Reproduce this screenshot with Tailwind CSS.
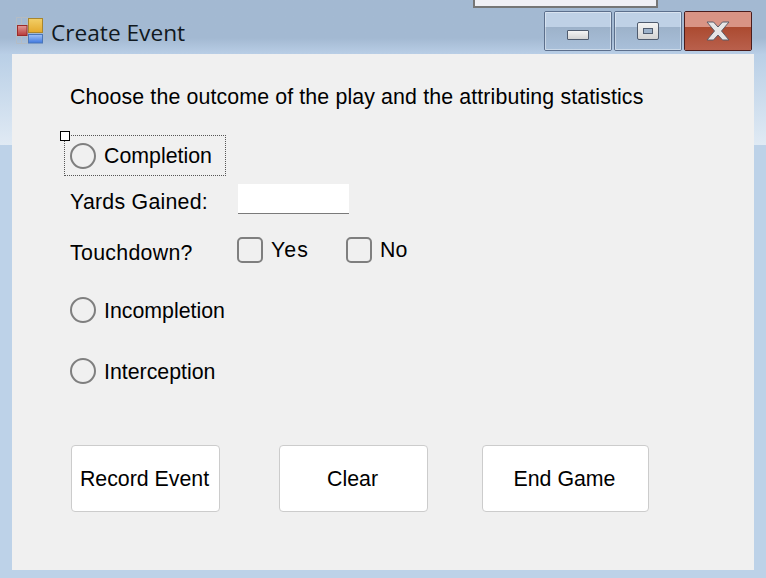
<!DOCTYPE html>
<html lang="en">
  <head>
    <meta charset="UTF-8" />
    <title>Create Event</title>
    <script src="https://cdn.jsdelivr.net/npm/@tailwindcss/browser@4"></script>
  </head>
  <body class="m-0 overflow-hidden bg-[#bdd2e8]">
    <div class="relative w-[766px] h-[578px] overflow-hidden font-['Liberation_Sans',sans-serif] text-[21.33px] text-black bg-[#bdd2e8]">
      <!-- window side glow -->
      <div class="absolute left-0 top-[54px] w-[12px] h-[91px] bg-gradient-to-b from-[#b9cfe6] to-[#e0eaf4]"></div>
      <div class="absolute right-0 top-[54px] w-[12px] h-[91px] bg-gradient-to-b from-[#b9cfe6] to-[#e0eaf4]"></div>

      <!-- title bar -->
      <div class="h-[54px] flex items-start bg-gradient-to-b from-[#a3b9d2] via-[#a3b9d2] via-70% to-[#b9cee6] relative">
        <svg class="absolute left-[16px] top-[17px]" width="28" height="28" viewBox="0 0 28 28">
          <defs>
            <linearGradient id="red" x1="0" y1="0" x2="0" y2="1"><stop offset="0" stop-color="#e09a98" /><stop offset="1" stop-color="#b83a38" /></linearGradient>
            <linearGradient id="yellow" x1="0" y1="0" x2="0" y2="1"><stop offset="0" stop-color="#f2cf68" /><stop offset="1" stop-color="#e4a92c" /></linearGradient>
            <linearGradient id="blue" x1="0" y1="0" x2="0" y2="1"><stop offset="0" stop-color="#a2c2f6" /><stop offset="1" stop-color="#3f78e0" /></linearGradient>
          </defs>
          <path d="M0.5 0.5H11.5V26.5H0.5ZM0.5 8H11M0.5 19.5H11M5.5 0.5V8M5.5 20V26.5" fill="none" stroke="#b4bcc4" />
          <rect x="1.5" y="8.5" width="9.5" height="10" fill="url(#red)" stroke="#9c2a2a" />
          <rect x="12.5" y="1.5" width="14" height="14" fill="url(#yellow)" stroke="#a8862e" />
          <rect x="12.5" y="17.5" width="14" height="8.5" fill="url(#blue)" stroke="#4a76b8" />
        </svg>
        <span class="ml-[51px] mt-[18px] font-['Open_Sans',sans-serif] text-[22.67px] leading-[30px] text-[#101820]">Create Event</span>

        <!-- window buttons -->
        <div class="absolute left-[544px] top-[11px] flex gap-[2px]">
          <div class="relative w-[68px] h-[40px] rounded-[2px] border border-[#5c6f8c] overflow-hidden flex flex-col">
            <div class="h-[15px] bg-[#bfd1e6]"></div>
            <div class="flex-1 bg-gradient-to-b from-[#9db2ca] to-[#a9c0da]"></div>
            <div class="absolute inset-0 border border-white/40"></div>
            <div class="absolute left-[22px] top-[18px] w-[22px] h-[10px] rounded-[1px] border border-[#4f5b6e] bg-gradient-to-b from-[#f4f4f4] to-[#d4d4d4]"></div>
          </div>
          <div class="relative w-[68px] h-[40px] rounded-[2px] border border-[#5c6f8c] overflow-hidden flex flex-col">
            <div class="h-[15px] bg-[#bfd1e6]"></div>
            <div class="flex-1 bg-gradient-to-b from-[#9db2ca] to-[#a9c0da]"></div>
            <div class="absolute inset-0 border border-white/40"></div>
            <div class="absolute left-[22px] top-[10px] w-[22px] h-[18px] rounded-[2px] border border-[#4f5b6e] bg-gradient-to-b from-[#f4f4f4] to-[#d4d4d4] flex items-center justify-center">
              <div class="w-[10px] h-[6px] border border-[#4f5b6e] bg-[#9db2ca]"></div>
            </div>
          </div>
          <div class="relative w-[68px] h-[40px] rounded-[2px] border border-[#4a1c1c] overflow-hidden flex flex-col">
            <div class="h-[15px] bg-[#d99485]"></div>
            <div class="flex-1 bg-gradient-to-b from-[#ab4a30] to-[#b9604c]"></div>
            <svg class="absolute left-[21px] top-[9px]" width="24" height="20" viewBox="0 0 24 20">
              <path d="M1 1H7.5L12 6L16.5 1H23L15.5 10L23 19H16.5L12 14L7.5 19H1L8.5 10Z" fill="#e6e6e6" stroke="#5d5d68" stroke-width="1" />
            </svg>
          </div>
        </div>
      </div>

      <!-- window behind, peeking in at the top -->
      <div class="absolute left-[473px] top-0 w-[185px] h-[8px] bg-[#f0f0f5] border-x-2 border-b-2 border-[#767676]"></div>

      <!-- form body -->
      <div class="absolute left-[12px] top-[54px] w-[742px] h-[516px] bg-[#f0f0f0]">
        <div class="pl-[58px] pt-[31px]">
          <div class="leading-[24px] tracking-[0.13px]">Choose the outcome of the play and the attributing statistics</div>

          <!-- selected control -->
          <div class="relative mt-[26px] -ml-[6px] w-[162px] h-[41px] border border-dotted border-[#555] flex items-center pl-[5px]">
            <span class="absolute -left-[5px] -top-[5px] w-[10px] h-[10px] bg-white border border-black"></span>
            <span class="w-[26px] h-[26px] rounded-full border-2 border-[#7f7f7f] bg-[#f0f0f0]"></span>
            <span class="ml-[8px] pt-[2px]">Completion</span>
          </div>

          <div class="flex items-center mt-[7px] h-[32px]">
            <span class="w-[168px] pt-[7px] tracking-[0.25px]">Yards Gained:</span>
            <div class="w-[111px] h-[30px] bg-white border-b border-[#7a7a7a]"></div>
          </div>

          <div class="flex items-center mt-[22px] h-[26px]">
            <span class="w-[167px] pt-[8px] tracking-[0.3px]">Touchdown?</span>
            <span class="w-[26px] h-[26px] rounded-[5px] border-2 border-[#7f7f7f]"></span>
            <span class="ml-[8px] w-[75px] mt-[1px] tracking-[1px]">Yes</span>
            <span class="w-[26px] h-[26px] rounded-[5px] border-2 border-[#7f7f7f]"></span>
            <span class="ml-[8px] mt-[1px]">No</span>
          </div>

          <div class="flex items-center mt-[34px] h-[26px]">
            <span class="w-[26px] h-[26px] rounded-full border-2 border-[#7f7f7f]"></span>
            <span class="ml-[8px] pt-[4px]">Incompletion</span>
          </div>
          <div class="flex items-center mt-[35px] h-[26px]">
            <span class="w-[26px] h-[26px] rounded-full border-2 border-[#7f7f7f]"></span>
            <span class="ml-[8px] pt-[4px]">Interception</span>
          </div>

          <div class="flex mt-[61px] ml-[1px]">
            <button class="w-[149px] h-[67px] pt-[2px] pr-[2px] bg-white border border-[#cccccc] rounded-[4px]">Record Event</button>
            <button class="ml-[59px] w-[149px] h-[67px] pt-[2px] pr-[2px] bg-white border border-[#cccccc] rounded-[4px]">Clear</button>
            <button class="ml-[54px] w-[167px] h-[67px] pt-[2px] pr-[2px] bg-white border border-[#cccccc] rounded-[4px]">End Game</button>
          </div>
        </div>
      </div>
    </div>
  </body>
</html>
